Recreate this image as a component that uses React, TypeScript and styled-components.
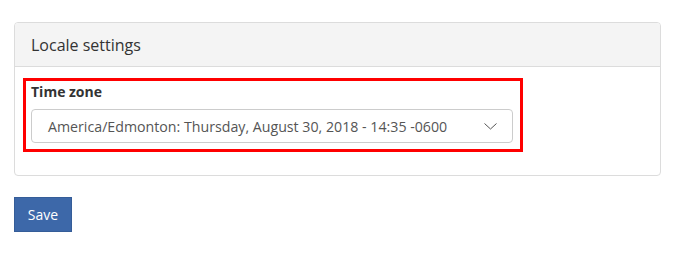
import React from "react";
import styled, { createGlobalStyle } from "styled-components";

const Global = createGlobalStyle`
  html, body { margin: 0; padding: 0; background: #fff; }
  body { font-family: "Open Sans", "Noto Sans", sans-serif; color: #333; }
  * { box-sizing: border-box; }
`;

const Page = styled.div`
  padding: 22px 20px 0 14px;
  display: flex;
  flex-direction: column;
  align-items: flex-start;
`;

const Card = styled.section`
  width: 647px;
  border: 1px solid #dcdcdc;
  border-radius: 4px;
  background: #fff;
  overflow: hidden;
`;

const CardHeader = styled.header`
  height: 44px;
  background: #f4f4f4;
  border-bottom: 1px solid #dcdcdc;
  padding: 0 16px;
  display: flex;
  align-items: center;
  font-size: 16px;
  color: #333;
`;

const CardBody = styled.div`
  padding: 11px 8px 23px;
`;

const Highlight = styled.div`
  width: 500px;
  border: 3px solid #ff0000;
  padding: 1px 7px 6px 5px;
  display: flex;
  flex-direction: column;
  gap: 7px;
`;

const Label = styled.label`
  font-size: 14px;
  font-weight: 700;
  line-height: 20px;
  color: #333;
`;

const SelectBox = styled.div`
  height: 34px;
  border: 1px solid #cccccc;
  border-radius: 4px;
  display: flex;
  align-items: center;
  justify-content: space-between;
  padding: 0 15px 0 16px;
  font-size: 14.2px;
  color: #555;
`;

const Chevron = styled.svg`
  width: 13px;
  height: 7px;
  flex: none;
`;

const SaveButton = styled.button`
  margin-top: 21px;
  width: 58px;
  height: 35px;
  background: #3d68a9;
  border: 1px solid #355d98;
  color: #fff;
  font-family: "Open Sans", "Noto Sans", sans-serif;
  font-size: 14px;
  padding: 0;
  border-radius: 0;
`;

export default function App() {
  return (
    <>
      <Global />
      <Page>
        <Card>
          <CardHeader>Locale settings</CardHeader>
          <CardBody>
            <Highlight>
              <Label>Time zone</Label>
              <SelectBox>
                <span>America/Edmonton: Thursday, August 30, 2018 - 14:35 -0600</span>
                <Chevron viewBox="0 0 13 7">
                  <path d="M0.5 0.5 L6.5 6 L12.5 0.5" fill="none" stroke="#555" strokeWidth="1" />
                </Chevron>
              </SelectBox>
            </Highlight>
          </CardBody>
        </Card>
        <SaveButton>Save</SaveButton>
      </Page>
    </>
  );
}
